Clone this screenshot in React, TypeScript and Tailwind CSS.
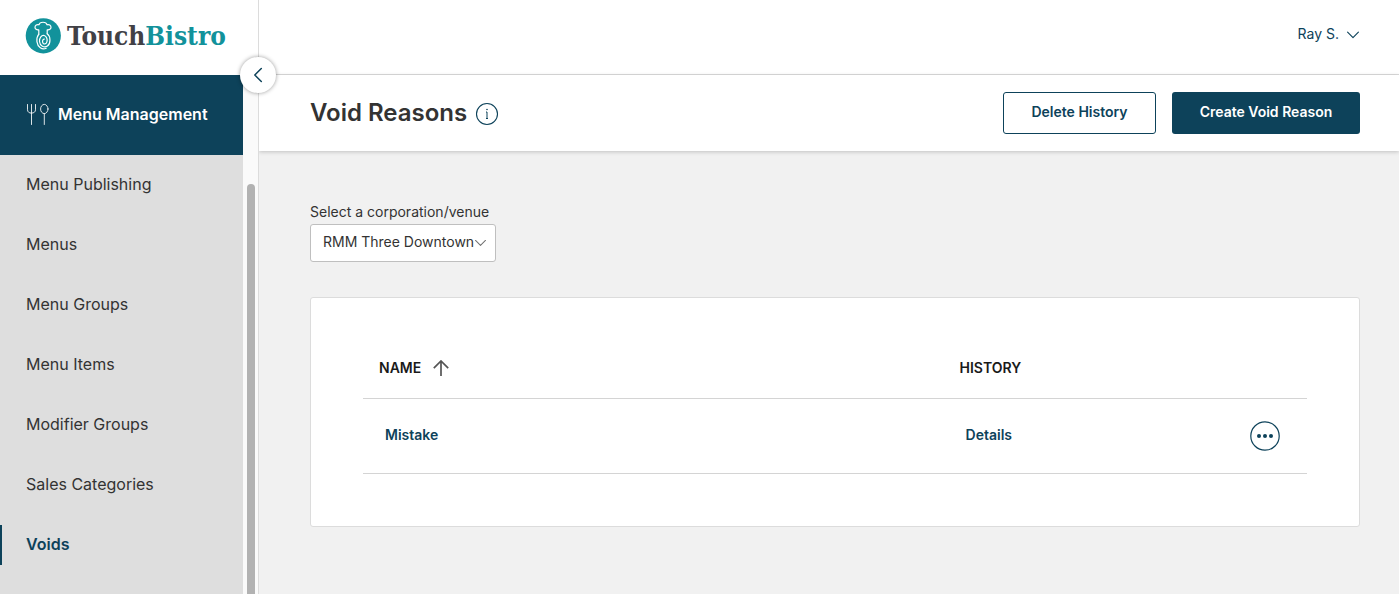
import React from "react";

const navItems = [
  "Menu Publishing",
  "Menus",
  "Menu Groups",
  "Menu Items",
  "Modifier Groups",
  "Sales Categories",
  "Voids",
];

function ChefMark() {
  return (
    <svg viewBox="0 0 36 36" className="size-9 shrink-0" fill="none" aria-hidden="true">
      <circle cx="18.300" cy="17.800" r="17.600" fill="#12929b" />
      <g stroke="#fff" strokeWidth="1.200" strokeLinecap="round" strokeLinejoin="round">
        <path d="M13.800 16.200V11.800c-2.200.4-3.800-.8-3.800-2.500 0-2 2-3.100 3.900-2.500.9-3.400 7.300-3.400 8.200 0 1.900-.6 3.900.5 3.900 2.500 0 1.700-1.600 2.900-3.800 2.500v4" />
        <path d="M22.200 15.800c3.600 2.600 3.700 9.700.2 12.200-3.200 2.200-7.600-.3-7.900-4.500-.3-3.800 2.200-6.700 4.700-6 2.300.6 3.500 3.800 2.700 6.400-.7 2.400-3.300 2.800-4.100.9-.7-1.700.1-4 1.500-3.700" />
        <path d="M13.800 16.200c-3.300 4.300-2.200 11.100 1.500 13.600 1.900 1.300 4.200 1.300 5.900.5" />
      </g>
    </svg>
  );
}

function ForkSpoonIcon() {
  return (
    <svg viewBox="0 0 24 24" className="size-6 shrink-0" fill="none" stroke="#fff" strokeWidth="1" strokeOpacity="0.85" strokeLinecap="round" aria-hidden="true">
      <path d="M1.500 2.500v5.300c0 2.100 1.700 3.300 4 3.300s4-1.200 4-3.300V2.500M5.500 2.500v20" />
      <ellipse cx="18.300" cy="7" rx="3.700" ry="4.600" />
      <path d="M18.300 11.600v10.900" />
    </svg>
  );
}

function Chevron({ className }: { className: string }) {
  return (
    <svg viewBox="0 0 12 8" className={className} fill="none" stroke="currentColor" strokeWidth="1.100" strokeLinecap="round" strokeLinejoin="round" aria-hidden="true">
      <path d="M.6 1.200 6 6.700l5.400-5.500" />
    </svg>
  );
}

function Sidebar() {
  return (
    <aside className="relative flex w-[259px] shrink-0 flex-col border-r border-[#dcdcdc] bg-white">
      <a href="#home" className="flex h-[75px] items-center gap-1.5 pb-1 pl-[25px]">
        <ChefMark />
        <span className="font-['DejaVu_Serif_Condensed','DejaVu_Serif',serif] text-[26px] leading-8 font-bold text-[#414046]">
          Touch<span className="text-[#12929b]">Bistro</span>
        </span>
      </a>
      <div className="flex flex-1">
        <nav className="flex-1 bg-[#dedede]">
          <div className="flex h-20 items-center gap-2 bg-[#0d425a] pb-0.5 pl-[26px] text-base font-semibold text-white">
            <ForkSpoonIcon />
            Menu Management
          </div>
          <ul>
            {navItems.map((item) => (
              <li key={item} className="flex h-[60px] items-center">
                <a
                  href="#nav"
                  aria-current={item === "Voids" ? "page" : undefined}
                  className={
                    item === "Voids"
                      ? "flex h-10 w-full items-center border-l-2 border-[#0d425a] pb-0.5 pl-6 font-semibold text-[#0d425a]"
                      : "flex h-10 w-full items-center border-l-2 border-transparent pb-0.5 pl-6"
                  }
                >
                  {item}
                </a>
              </li>
            ))}
          </ul>
        </nav>
        <div className="flex w-[15px] justify-center bg-[#fafafa] pt-[109px]">
          <div className="w-2 rounded-t-full bg-[#b2b2b2]" />
        </div>
      </div>
      <button
        type="button"
        aria-label="Collapse menu"
        className="absolute top-[57px] -right-[18px] flex size-9 items-center justify-center rounded-full bg-white text-[#0d425a] shadow-[0_0_4px_rgba(0,0,0,0.4)]"
      >
        <svg viewBox="0 0 16 16" className="size-4" fill="none" stroke="currentColor" strokeWidth="1.500" strokeLinecap="round" strokeLinejoin="round" aria-hidden="true">
          <path d="M11.300 1.500 4.800 8l6.500 6.500" />
        </svg>
      </button>
    </aside>
  );
}

export default function App() {
  return (
    <div className="flex min-h-screen bg-[#f1f1f1] font-['Inter','Liberation_Sans',sans-serif] text-base text-[#333]">
      <Sidebar />
      <div className="min-w-0 flex-1">
        <header className="flex h-[75px] items-center justify-end border-b border-[#dcdcdc] bg-white pr-10 pb-1.5">
          <button type="button" className="flex items-center gap-2 text-sm text-[#0d425a]">
            Ray S.
            <Chevron className="mt-0.5 h-4 w-3" />
          </button>
        </header>
        <div className="flex h-[76px] items-center justify-between bg-white pr-[39px] pl-[51px] shadow-[0_1px_4px_rgba(0,0,0,0.2)]">
          <div className="flex items-center gap-2">
            <h1 className="text-2xl font-semibold">Void Reasons</h1>
            <button type="button" aria-label="About void reasons">
              <svg viewBox="0 0 24 24" className="mt-0.5 size-6" fill="none" stroke="#0d425a" aria-hidden="true">
                <circle cx="12" cy="12" r="10.500" strokeWidth="1.100" />
                <path d="M12 10v6.500M11 10h1M11 16.500h2" strokeWidth="1" />
                <circle cx="12" cy="7.500" r=".8" fill="#0d425a" stroke="none" />
              </svg>
            </button>
          </div>
          <div className="flex gap-4 text-sm font-semibold">
            <button type="button" className="h-[42px] w-[153px] rounded-[3px] border border-[#0d425a] bg-white pb-0.5 text-[#0d425a]">
              Delete History
            </button>
            <button type="button" className="h-[42px] w-[188px] rounded-[3px] bg-[#0d425a] pb-0.5 text-white">
              Create Void Reason
            </button>
          </div>
        </div>
        <main className="pt-[51px] pr-[39px] pl-[51px]">
          <label htmlFor="venue" className="block pb-0.5 text-sm leading-5">
            Select a corporation/venue
          </label>
          <div className="relative w-[186px]">
            <select
              id="venue"
              className="h-[38px] w-full appearance-none rounded-[3px] border border-[#bfbfbf] bg-white pb-0.5 pl-3 text-sm"
            >
              <option>RMM Three Downtown</option>
            </select>
            <Chevron className="pointer-events-none absolute top-[11px] right-2.5 h-4 w-[11px] text-[#707070]" />
          </div>
          <div className="mt-[35px] rounded-[3px] border border-[#dcdcdc] bg-white px-[52px] pt-10 pb-[52px]">
            <table className="w-full table-fixed border-collapse text-left text-sm">
              <thead>
                <tr className="h-[60px] border-b border-[#d4d4d4] text-[#1a1a1a]">
                  <th scope="col" className="w-[61.5%] px-4 font-semibold">
                    <button type="button" className="flex items-center gap-3">
                      NAME
                      <svg viewBox="0 0 16 16" className="size-4" fill="none" stroke="#555" strokeWidth="1.700" aria-hidden="true">
                        <path d="M8 16V1.200M.8 8.200 8 1l7.200 7.200" />
                      </svg>
                    </button>
                  </th>
                  <th scope="col" className="px-4 font-semibold">HISTORY</th>
                  <th scope="col" aria-label="Actions" className="w-[84px]" />
                </tr>
              </thead>
              <tbody>
                <tr className="h-[75px] border-b border-[#d4d4d4] font-semibold text-[#0d425a]">
                  <td className="px-[22px] pb-0.5"><a href="#mistake">Mistake</a></td>
                  <td className="px-[22px] pb-0.5"><a href="#details">Details</a></td>
                  <td className="px-[27px]">
                    <button type="button" aria-label="More actions" className="block">
                      <svg viewBox="0 0 30 30" className="size-[30px]" fill="#0d425a" aria-hidden="true">
                        <circle cx="15" cy="15" r="14.200" fill="none" stroke="#0d425a" strokeWidth="1.200" />
                        <circle cx="9" cy="15" r="2" />
                        <circle cx="15" cy="15" r="2" />
                        <circle cx="21" cy="15" r="2" />
                      </svg>
                    </button>
                  </td>
                </tr>
              </tbody>
            </table>
          </div>
        </main>
      </div>
    </div>
  );
}
